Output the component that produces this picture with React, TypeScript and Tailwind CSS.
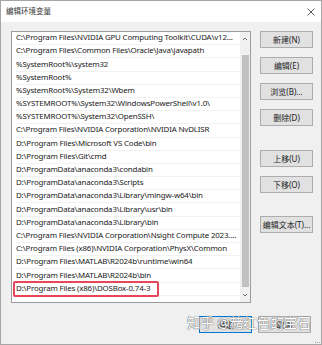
const paths = [
    "C:\\Program Files\\NVIDIA GPU Computing Toolkit\\CUDA\\v12...",
    "C:\\Program Files\\Common Files\\Oracle\\Java\\javapath",
    "%SystemRoot%\\system32",
    "%SystemRoot%",
    "%SystemRoot%\\System32\\Wbem",
    "%SYSTEMROOT%\\System32\\WindowsPowerShell\\v1.0\\",
    "%SYSTEMROOT%\\System32\\OpenSSH\\",
    "C:\\Program Files\\NVIDIA Corporation\\NVIDIA NvDLISR",
    "D:\\Program Files\\Microsoft VS Code\\bin",
    "D:\\Program Files\\Git\\cmd",
    "D:\\ProgramData\\anaconda3\\condabin",
    "D:\\ProgramData\\anaconda3\\Scripts",
    "D:\\ProgramData\\anaconda3\\Library\\mingw-w64\\bin",
    "D:\\ProgramData\\anaconda3\\Library\\usr\\bin",
    "D:\\ProgramData\\anaconda3\\Library\\bin",
    "C:\\Program Files\\NVIDIA Corporation\\Nsight Compute 2023....",
    "C:\\Program Files (x86)\\NVIDIA Corporation\\PhysX\\Common",
    "D:\\Program Files\\MATLAB\\R2024b\\runtime\\win64",
    "D:\\Program Files\\MATLAB\\R2024b\\bin",
    "D:\\Program Files (x86)\\DOSBox-0.74-3",
]

const font = "font-['Noto_Sans','Noto_Sans_CJK_SC',sans-serif]"

function Btn(props: { label: string, primary?: boolean }) {
    return (
        <div className={`h-[17px] w-[53px] flex items-center justify-center text-[8px] text-[#222] bg-[#e1e1e1] border ${props.primary ? "border-[#0078d7]" : "border-[#adadad]"}`}>
            {props.label}
        </div>
    )
}

export default function App() {
    return (
        <div className={`w-[322px] h-[345px] bg-[#f0f0f0] border border-[#a5a5a5] flex flex-col relative ${font}`}>
            <div className="h-[21px] bg-white flex items-center justify-between pl-[5px] pr-[6px]">
                <span className="text-[7.5px] text-[#333]">编辑环境变量</span>
                <svg width="8" height="8" viewBox="0 0 8 8">
                    <path d="M0.5 0.5 L7.5 7.5 M7.5 0.5 L0.5 7.5" stroke="#444" strokeWidth="0.9" />
                </svg>
            </div>
            <div className="flex pl-[10px] pt-[9px]">
                <div className="w-[240px] h-[272px] bg-white border border-[#9c9c9c] flex">
                    <div className="flex-1 min-w-0 pl-[4px] flex flex-col overflow-hidden">
                        {paths.map((p, i) => (
                            <div key={i} className="h-[13.2px] shrink-0 border-b border-[#f2f2f2] flex items-center text-[7.9px] tracking-[-0.16px] leading-none text-[#1a1a1a] whitespace-nowrap relative">
                                {p}
                                {i === paths.length - 1 && (
                                    <div className="absolute left-[-3px] top-[-2px] w-[146px] h-[16px] border-2 border-[#e6475a] rounded-[2px]" />
                                )}
                            </div>
                        ))}
                    </div>
                    <div className="w-[10px] shrink-0 bg-[#f0f0f0] flex flex-col items-center">
                        <svg width="8" height="14" viewBox="0 0 8 14" className="shrink-0">
                            <path d="M2 8 L4 6 L6 8" stroke="#606060" strokeWidth="0.9" fill="none" />
                        </svg>
                        <div className="w-[7px] flex-1 bg-[#c1c1c1] mt-[9px] mb-[1px]" />
                        <svg width="8" height="14" viewBox="0 0 8 14" className="shrink-0">
                            <path d="M2 6 L4 8 L6 6" stroke="#606060" strokeWidth="0.9" fill="none" />
                        </svg>
                    </div>
                </div>
                <div className="ml-[9px] flex flex-col">
                    <div className="flex flex-col gap-[9px]">
                        <Btn label="新建(N)" />
                        <Btn label="编辑(E)" />
                        <Btn label="浏览(B)..." />
                        <Btn label="删除(D)" />
                    </div>
                    <div className="flex flex-col gap-[9px] mt-[24px]">
                        <Btn label="上移(U)" />
                        <Btn label="下移(O)" />
                    </div>
                    <div className="mt-[23px]">
                        <Btn label="编辑文本(T)..." />
                    </div>
                </div>
            </div>
            <div className="flex justify-end gap-[6px] pr-[10px] mt-[13px]">
                <Btn label="确定" primary />
                <Btn label="取消" />
            </div>
            <div className="absolute left-[186px] top-[316px] text-[13.5px] leading-none text-white [text-shadow:0_0_1px_#555,0_0_1px_#555] whitespace-nowrap">
                知乎 @赭红色的宝石
            </div>
            <div className="absolute right-[1px] bottom-[1px] w-[7px] h-[7px] flex flex-wrap justify-end content-end gap-[1px]">
                <span className="w-[1px] h-[1px] bg-[#a0a0a0]" />
                <span className="w-[1px] h-[1px] bg-[#a0a0a0]" />
                <span className="w-[1px] h-[1px] bg-[#a0a0a0]" />
            </div>
        </div>
    )
}
